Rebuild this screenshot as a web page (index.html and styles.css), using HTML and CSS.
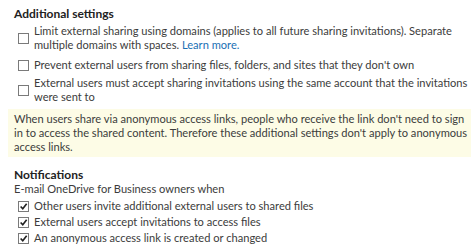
FILE: index.html
```html
<!DOCTYPE html>
<html>
<head>
<meta charset="utf-8">
<link rel="stylesheet" href="styles.css">
</head>
<body>
<div class="page">
  <section class="group">
    <h2 class="title">Additional settings</h2>
    <div class="opts">
      <label class="opt">
        <span class="box"></span>
        <span class="txt">Limit external sharing using domains (applies to all future sharing invitations). Separate multiple domains with spaces. <a class="link">Learn more.</a></span>
      </label>
      <label class="opt single">
        <span class="box"></span>
        <span class="txt">Prevent external users from sharing files, folders, and sites that they don't own</span>
      </label>
      <label class="opt">
        <span class="box"></span>
        <span class="txt">External users must accept sharing invitations using the same account that the invitations were sent to</span>
      </label>
    </div>
    <p class="note">When users share via anonymous access links, people who receive the link don't need to sign in to access the shared content. Therefore these additional settings don't apply to anonymous access links.</p>
  </section>
  <section class="group notif">
    <h2 class="title">Notifications</h2>
    <p class="sub">E-mail OneDrive for Business owners when</p>
    <div class="checks">
      <label class="chk"><span class="box on"><svg viewBox="0 0 10 10" width="9" height="9"><path d="M1.8 5 L4.2 7.6 L8.5 2" fill="none" stroke="#222" stroke-width="1.8"/></svg></span><span class="txt">Other users invite additional external users to shared files</span></label>
      <label class="chk"><span class="box on"><svg viewBox="0 0 10 10" width="9" height="9"><path d="M1.8 5 L4.2 7.6 L8.5 2" fill="none" stroke="#222" stroke-width="1.8"/></svg></span><span class="txt">External users accept invitations to access files</span></label>
      <label class="chk"><span class="box on"><svg viewBox="0 0 10 10" width="9" height="9"><path d="M1.8 5 L4.2 7.6 L8.5 2" fill="none" stroke="#222" stroke-width="1.8"/></svg></span><span class="txt">An anonymous access link is created or changed</span></label>
    </div>
  </section>
</div>
</body>
</html>
```
FILE: styles.css
```css
html, body {
  margin: 0;
  padding: 0;
  background: #ffffff;
}
.page {
  width: 474px;
  height: 250px;
  box-sizing: border-box;
  padding: 6px 3px 0 8px;
  font-family: Lato, "Noto Sans", sans-serif;
  font-size: 11.1px;
  line-height: 14px;
  color: #3c3c3c;
  overflow: hidden;
}
.title {
  margin: 0 0 2px 6px;
  font-size: 12px;
  line-height: 16px;
  font-weight: 700;
  color: #222;
}
.opts {
  display: flex;
  flex-direction: column;
  padding-left: 10px;
}
.opt {
  display: flex;
  align-items: center;
  gap: 5px;
}
.opt + .opt {
  margin-top: 6px;
}
.opt.single + .opt {
  margin-top: 4px;
}
.box {
  flex: none;
  width: 9px;
  height: 9px;
  border: 1px solid #7a7a7a;
  background: #fff;
  display: flex;
  align-items: center;
  justify-content: center;
}
.txt {
  display: block;
  min-width: 0;
}
.link {
  color: #1a6fb4;
}
.note {
  margin: 5px 5px 0 0;
  padding: 3px 0 3px 6px;
  background: #fdfce6;
  margin-right: 0;
}
.notif {
  margin-top: 10px;
}
.notif .title {
  margin-bottom: 0;
  line-height: 15px;
}
.sub {
  margin: 0 0 3px 6px;
}
.checks {
  display: flex;
  flex-direction: column;
  gap: 2px;
  padding-left: 10px;
}
.chk {
  display: flex;
  align-items: center;
  gap: 5px;
}
.box.on svg {
  display: block;
}
```
